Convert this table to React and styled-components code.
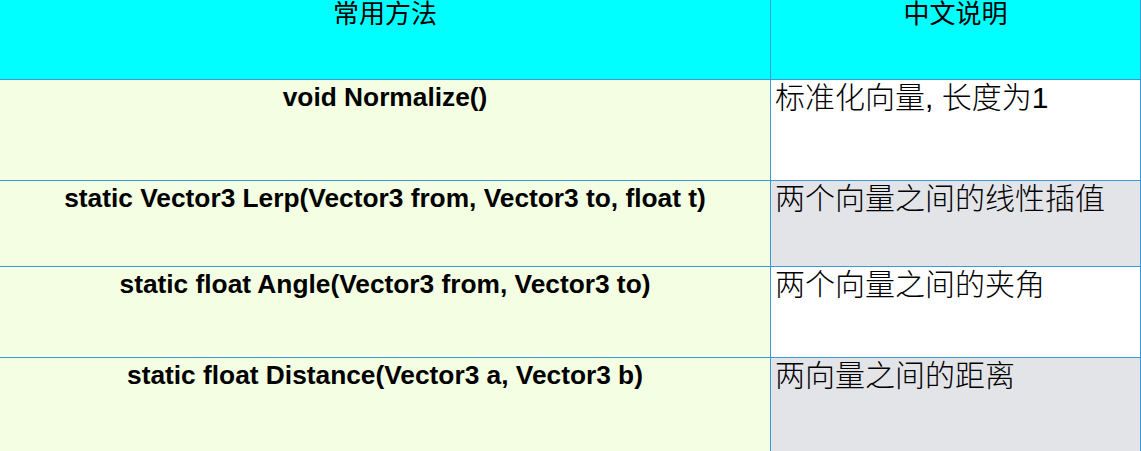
import React from "react";
import styled, { createGlobalStyle } from "styled-components";

const Global = createGlobalStyle`
  html, body { margin: 0; padding: 0; background: #ffffff; }
  #root { width: 1141px; }
`;

const Table = styled.div`
  display: grid;
  grid-template-columns: 771px 370px;
  width: 1141px;
`;

const HeadCell = styled.div`
  box-sizing: border-box;
  height: 80px;
  background: #00ffff;
  border-bottom: 1px solid #3a9ad9;
  border-right: 1px solid #3a9ad9;
  text-align: center;
  font-family: "Liberation Serif", "Noto Sans CJK SC", serif;
  font-size: 26px;
  line-height: 30px;
  padding-top: 0px;
  color: #000;
`;

const MethodCell = styled.div`
  box-sizing: border-box;
  height: ${(p) => p.$h}px;
  background: #f3fee2;
  border-bottom: 1px solid #3a9ad9;
  border-right: 1px solid #3a9ad9;
  text-align: center;
  font-family: "Liberation Sans", Arial, sans-serif;
  font-weight: bold;
  font-size: 26.3px;
  line-height: 30px;
  padding-top: 2px;
  color: #000;
`;

const DescCell = styled.div`
  box-sizing: border-box;
  height: ${(p) => p.$h}px;
  background: ${(p) => (p.$shade ? "#e3e4e8" : "#ffffff")};
  border-bottom: 1px solid #3a9ad9;
  border-right: 1px solid #3a9ad9;
  text-align: left;
  padding-left: 4px;
  padding-top: 0px;
  font-family: "Liberation Sans", "Noto Sans CJK SC", sans-serif;
  font-weight: 300;
  font-size: 30px;
  line-height: 36px;
  color: #000;
`;

const rows = [
  { m: "void Normalize()", d: "标准化向量, 长度为1", h: 101 },
  { m: "static Vector3 Lerp(Vector3 from, Vector3 to, float t)", d: "两个向量之间的线性插值", h: 86 },
  { m: "static float Angle(Vector3 from, Vector3 to)", d: "两个向量之间的夹角", h: 91 },
  { m: "static float Distance(Vector3 a, Vector3 b)", d: "两向量之间的距离", h: 100 },
];

export default function App() {
  return (
    <>
      <Global />
      <Table>
        <HeadCell>常用方法</HeadCell>
        <HeadCell>中文说明</HeadCell>
        {rows.map((r, i) => (
          <React.Fragment key={i}>
            <MethodCell $h={r.h}>{r.m}</MethodCell>
            <DescCell $h={r.h} $shade={i % 2 === 1}>{r.d}</DescCell>
          </React.Fragment>
        ))}
      </Table>
    </>
  );
}
